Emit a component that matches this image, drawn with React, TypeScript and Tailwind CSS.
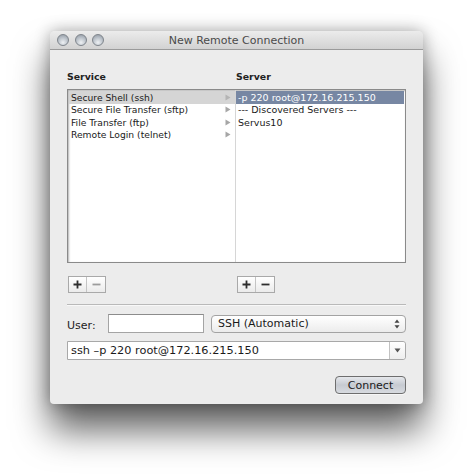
import React from "react";

const font = { fontFamily: '"DejaVu Sans", "Liberation Sans", sans-serif' };

function Arrow({ light }: { light?: boolean }) {
  return (
    <svg width="6" height="7" viewBox="0 0 6 7" className="shrink-0">
      <path d="M0.5 0.5 L5.5 3.5 L0.5 6.5 Z" fill={light ? "#b4b4b4" : "#a6a6a6"} />
    </svg>
  );
}

function PlusMinus({ minusEnabled }: { minusEnabled?: boolean }) {
  return (
    <div className="flex h-[17px] border border-[#a9a9a9] bg-gradient-to-b from-[#ffffff] to-[#ebebeb]">
      <div className="w-[18px] flex items-center justify-center border-r border-[#c4c4c4]">
        <svg width="9" height="9" viewBox="0 0 9 9">
          <path d="M4.5 0.5 V8.5 M0.5 4.5 H8.5" stroke="#2e2e2e" strokeWidth="1.8" />
        </svg>
      </div>
      <div className="w-[18px] flex items-center justify-center">
        <svg width="9" height="9" viewBox="0 0 9 9">
          <path d="M0.5 4.5 H8.5" stroke={minusEnabled ? "#2e2e2e" : "#9c9c9c"} strokeWidth="1.8" />
        </svg>
      </div>
    </div>
  );
}

export default function App() {
  const services = [
    "Secure Shell (ssh)",
    "Secure File Transfer (sftp)",
    "File Transfer (ftp)",
    "Remote Login (telnet)",
  ];
  const servers = ["-p 220 root@172.16.215.150", "--- Discovered Servers ---", "Servus10"];
  return (
    <div className="w-[474px] h-[474px] bg-white pt-[31px] pl-[50px]" style={font}>
      <div className="w-[373px] h-[373px] flex flex-col bg-[#ececec] rounded-t-[5px] rounded-b-[4px] shadow-[0_26px_36px_rgba(0,0,0,0.62),0_0_16px_rgba(0,0,0,0.32)]">
        {/* Title bar */}
        <div className="h-[19px] flex items-center rounded-t-[5px] bg-gradient-to-b from-[#ececec] to-[#d2d2d2] border-b border-[#9a9a9a]">
          <div className="w-[70px] flex items-center gap-[5.5px] pl-[7px]">
            <div className="w-[12px] h-[12px] rounded-full border border-[#7f858c] bg-[radial-gradient(circle_at_50%_75%,#eef1f4_0%,#b9c0c8_55%,#8d959e_100%)]" />
            <div className="w-[12px] h-[12px] rounded-full border border-[#7f858c] bg-[radial-gradient(circle_at_50%_75%,#eef1f4_0%,#b9c0c8_55%,#8d959e_100%)]" />
            <div className="w-[12px] h-[12px] rounded-full border border-[#7f858c] bg-[radial-gradient(circle_at_50%_75%,#eef1f4_0%,#b9c0c8_55%,#8d959e_100%)]" />
          </div>
          <div className="flex-1 text-center text-[11px] text-[#4a4a4a] leading-none pt-[1px]">New Remote Connection</div>
          <div className="w-[70px]" />
        </div>

        {/* Content */}
        <div className="flex flex-col px-[17px] pt-[21px]">
          <div className="flex h-[12px] items-center text-[9.4px] font-bold text-[#222]">
            <div className="w-[169px]">Service</div>
            <div>Server</div>
          </div>

          <div className="mt-[6px] h-[174px] flex border border-[#8a8a8a] bg-white shadow-[inset_1px_1px_2px_rgba(0,0,0,0.3)]">
            <div className="w-[168px] border-r border-[#d6d6d6] pt-[1px] pl-[1px]">
              {services.map((s, i) => (
                <div
                  key={s}
                  className={`h-[12.5px] flex items-center justify-between pl-[2px] pr-[4px] text-[9.2px] text-[#1a1a1a] ${i === 0 ? "bg-[#d5d5d5]" : ""}`}
                >
                  <span className="leading-none">{s}</span>
                  <Arrow light={i === 0} />
                </div>
              ))}
            </div>
            <div className="flex-1 pt-[1px] pr-[1px]">
              {servers.map((s, i) => (
                <div
                  key={s}
                  className={`h-[12.5px] flex items-center pl-[2px] text-[9.5px] leading-none ${i === 0 ? "bg-[#7787a3] text-white" : "text-[#1a1a1a]"}`}
                >
                  {s}
                </div>
              ))}
            </div>
          </div>

          <div className="mt-[9px] flex">
            <div className="w-[169px] pl-[1px]">
              <div className="inline-flex"><PlusMinus /></div>
            </div>
            <div className="pl-[1px]">
              <div className="inline-flex"><PlusMinus minusEnabled /></div>
            </div>
          </div>

          <div className="mt-[8px] h-[2px] border-t border-[#b9b9b9] border-b border-b-[#f8f8f8]" />

          <div className="mt-[8px] flex items-center h-[19px]">
            <div className="w-[41px] text-[11px] text-[#222] leading-none pt-[3px]">User:</div>
            <div className="w-[96px] h-[19px] bg-white border border-[#a4a4a4] border-t-[#8c8c8c]" />
            <div className="ml-[7px] flex-1 h-[18px] flex items-center justify-between rounded-[4px] border border-[#a3a3a3] bg-gradient-to-b from-[#ffffff] to-[#ececec] pl-[6px] pr-[5px]">
              <span className="text-[11px] text-[#1a1a1a] leading-none">SSH (Automatic)</span>
              <svg width="6" height="10" viewBox="0 0 6 10">
                <path d="M3 0.5 L5.5 3.8 H0.5 Z" fill="#444" />
                <path d="M3 9.5 L5.5 6.2 H0.5 Z" fill="#444" />
              </svg>
            </div>
          </div>

          <div className="mt-[8px] flex h-[19px] border border-[#a8a8a8] bg-white rounded-r-[3px]">
            <div className="flex-1 flex items-center pl-[3px] text-[11.3px] text-[#1a1a1a] leading-none">ssh –p 220 root@172.16.215.150</div>
            <div className="w-[16px] flex items-center justify-center border-l border-[#c2c2c2] bg-gradient-to-b from-[#ffffff] to-[#eeeeee] rounded-r-[3px]">
              <svg width="7" height="5" viewBox="0 0 7 5">
                <path d="M0.5 0.5 H6.5 L3.5 4.5 Z" fill="#555" />
              </svg>
            </div>
          </div>

          <div className="mt-[16px] flex justify-end">
            <div className="w-[71px] h-[18px] flex items-center justify-center rounded-[4px] border border-[#6e6e6e] bg-gradient-to-b from-[#e6e8ec] via-[#c6cad1] to-[#d8dbe0] text-[11px] text-[#1a1a1a] leading-none shadow-[0_1px_0_rgba(255,255,255,0.6)]">
              Connect
            </div>
          </div>
        </div>
      </div>
    </div>
  );
}
